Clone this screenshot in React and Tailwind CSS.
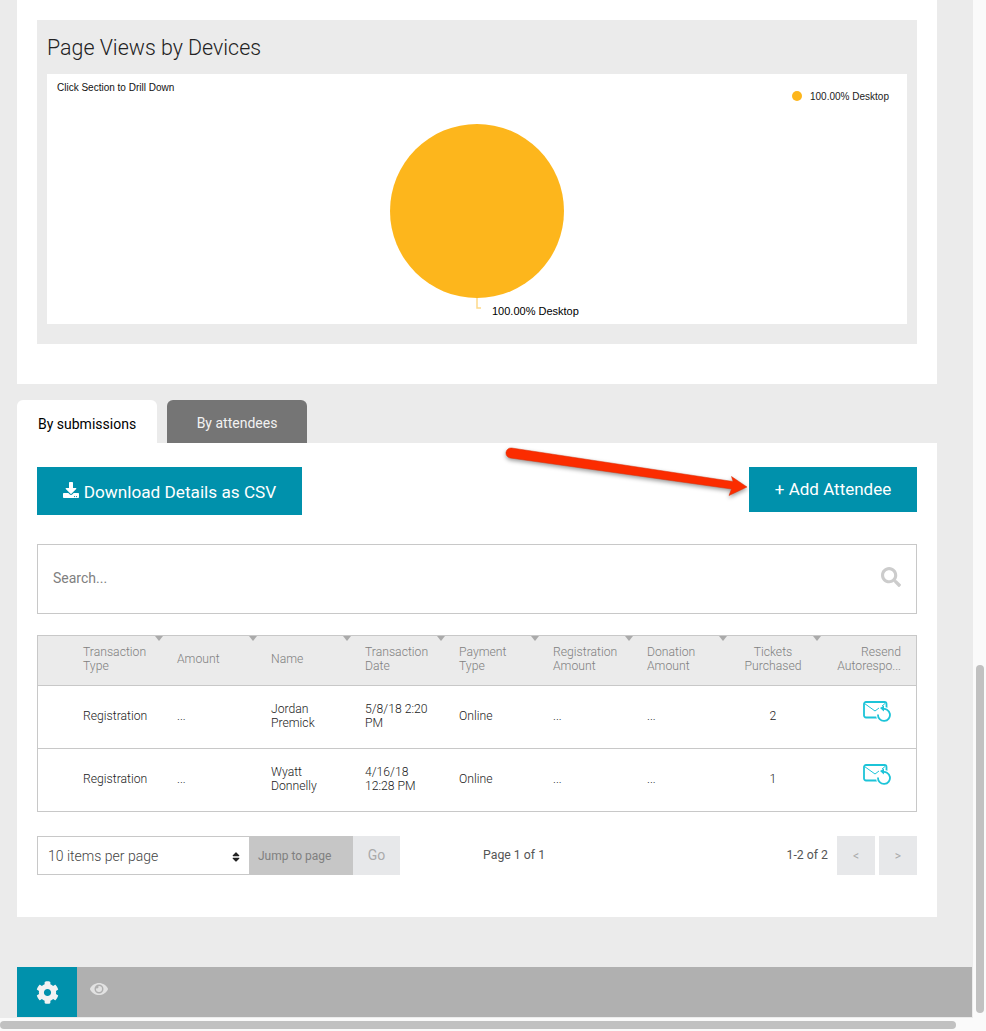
import { FaCog, FaDownload, FaEye, FaSearch, FaSort } from "react-icons/fa";

const headers = [
  ["Transaction", "Type"],
  ["Amount"],
  ["Name"],
  ["Transaction", "Date"],
  ["Payment", "Type"],
  ["Registration", "Amount"],
  ["Donation", "Amount"],
];

const rows = [
  { name: ["Jordan", "Premick"], date: ["5/8/18 2:20", "PM"], tickets: 2 },
  { name: ["Wyatt", "Donnelly"], date: ["4/16/18", "12:28 PM"], tickets: 1 },
];

const gridCols = "grid grid-cols-[45px_repeat(8,94px)_81px]";

function SortMark() {
  return (
    <svg className="absolute top-0 right-[14px]" width="8" height="5" viewBox="0 0 8 5">
      <path d="M0 0h8L4 5z" fill="#aaaaaa" />
    </svg>
  );
}

function Lines({ items }) {
  return items.map((t) => <div key={t}>{t}</div>);
}

function ResendIcon() {
  return (
    <svg width="28" height="21" viewBox="0 0 28 21" fill="none" stroke="#1cc4d8" strokeWidth="1.8">
      <rect x="1" y="1" width="22.5" height="15.5" rx="2" />
      <path d="M1.5 2.5 12 10l4-3M22 2.5 19 5" strokeWidth="1" />
      <circle cx="21" cy="14" r="8" fill="#fff" stroke="none" />
      <path d="M19 8.3a6 6 0 1 1-4 5.2" />
      <path d="M17 7l4-2.5v6z" fill="#1cc4d8" stroke="none" />
    </svg>
  );
}

export default function App() {
  return (
    <div className="w-[986px] h-[1031px] overflow-hidden flex flex-col bg-[#fafafa] font-['Roboto',sans-serif]">
      <div className="flex h-[1018px]">
        <main className="w-[973px] bg-[#ebebeb] pl-[17px]">
          <section className="w-[920px] h-[384px] bg-white p-5">
            <div className="h-[324px] bg-[#ebebeb] px-2.5">
              <h2 className="h-[54px] pt-[14px] text-[21.4px] leading-[28px] font-light text-[#222]">Page Views by Devices</h2>
              <svg className="block bg-white font-['Liberation_Sans',sans-serif]" width="860" height="250" viewBox="0 0 860 250">
                <text x="10" y="17" fontSize="10" fill="#111">Click Section to Drill Down</text>
                <circle cx="750" cy="22" r="5" fill="#fdb61c" />
                <text x="763" y="26" fontSize="10" fill="#222">100.00% Desktop</text>
                <circle cx="430" cy="137" r="87" fill="#fdb61c" />
                <path d="M430 224v10h4" fill="none" stroke="#fdd98a" strokeWidth="1.5" />
                <text x="445" y="241" fontSize="11" fill="#000">100.00% Desktop</text>
              </svg>
            </div>
          </section>

          <div className="flex gap-2.5 mt-4 h-[43px]">
            <div className="w-[140px] bg-white rounded-t-md pl-[21px] pt-[15px] text-[14px] leading-[18px] text-black">By submissions</div>
            <div className="w-[140px] bg-[#757575] rounded-t-md text-center pt-[14px] text-[14px] leading-[18px] text-[#f2f2f2]">By attendees</div>
          </div>

          <section className="relative w-[920px] h-[474px] bg-white px-5 pt-6">
            <svg className="absolute left-[483px] top-[2px] drop-shadow-[0_2px_2px_rgba(0,0,0,0.4)]" width="260" height="60" viewBox="0 0 260 60">
              <path d="M11.7 3 233 36.5l-1.5-5 15.5 10.500-18 8.500 2.500-6.500L10.300 13a5 5 0 0 1 1.400-10z" fill="#fb2c00" stroke="#d8300a" strokeWidth="0.5" />
            </svg>

            <div className="flex justify-between items-start">
              <button className="w-[265px] h-[48px] pt-[3px] bg-[#0091ac] text-white text-[17.2px] flex items-center justify-center gap-[5px]">
                <FaDownload className="text-[16px] mb-[6px]" />
                Download Details as CSV
              </button>
              <button className="w-[168px] h-[45px] bg-[#0091ac] text-white text-[17px]">+ Add Attendee</button>
            </div>

            <div className="mt-[29px] h-[70px] border border-[#c8c8c8] flex items-center pl-[15px] pr-[15px]">
              <input
                placeholder="Search..."
                className="flex-1 mb-0.5 outline-none text-[14px] text-[#555] placeholder:text-[#808080]"
              />
              <FaSearch className="text-[20px] text-[#cccccc] mb-1" />
            </div>

            <div className="mt-[21px] border border-[#c8c8c8] text-[12.2px] leading-[14px]">
              <div className={`${gridCols} h-[50px] bg-[#ebebeb] text-[#808080] font-light border-b border-[#c8c8c8]`}>
                <div />
                {headers.map((h, i) => (
                  <div key={i} className="relative flex flex-col justify-center pb-[3px]">
                    <Lines items={h} />
                    <SortMark />
                  </div>
                ))}
                <div className="relative flex flex-col justify-center pb-[3px] pr-[30px] text-center">
                  <div>Tickets</div>
                  <div className="-mx-2">Purchased</div>
                  <SortMark />
                </div>
                <div className="flex flex-col justify-center pb-[3px] pr-[15px] text-right whitespace-nowrap items-end">
                  <div>Resend</div>
                  <div>Autorespo...</div>
                </div>
              </div>

              {rows.map((r, i) => (
                <div
                  key={i}
                  className={`${gridCols} items-center text-[#222] font-light ${i === 0 ? "h-[63px] border-b border-[#c8c8c8]" : "h-[62px]"}`}
                >
                  <div />
                  <div className="pb-[3px]">Registration</div>
                  <div className="pb-[3px]">...</div>
                  <div className="pb-[3px]"><Lines items={r.name} /></div>
                  <div className="pb-[3px]"><Lines items={r.date} /></div>
                  <div className="pb-[3px]">Online</div>
                  <div className="pb-[3px]">...</div>
                  <div className="pb-[3px]">...</div>
                  <div className="pb-[3px] pr-[30px] text-center">{r.tickets}</div>
                  <div className="pb-[12px] flex justify-end pr-[25px]"><ResendIcon /></div>
                </div>
              ))}
            </div>

            <div className="flex items-center mt-6 h-[39px]">
              <div className="w-[213px] h-full border border-[#c8c8c8] flex items-center justify-between pl-2.5 pr-[7px] pt-0.5 text-[14px] text-[#444] font-light">
                10 items per page
                <FaSort className="text-[12px] text-[#222]" />
              </div>
              <div className="w-[103px] h-full bg-[#c6c6c6] pl-2 flex items-center text-[12px] text-[#808080]">Jump to page</div>
              <div className="w-[47px] h-full bg-[#e7e8ea] flex items-center justify-center text-[14px] text-[#aaaaaa]">Go</div>
              <div className="ml-[83px] text-[12.3px] text-[#555]">Page 1 of 1</div>
              <div className="ml-auto text-[12.3px] text-[#555]">1-2 of 2</div>
              <div className="ml-[9px] w-[38px] h-full bg-[#e7e8ea] flex items-center justify-center text-[12px] text-[#aaaaaa]">&lt;</div>
              <div className="ml-1 w-[38px] h-full bg-[#e7e8ea] flex items-center justify-center text-[12px] text-[#aaaaaa]">&gt;</div>
            </div>
          </section>

          <div className="mt-[50px] w-[955px] h-[50px] bg-[#b0b0b0] flex">
            <div className="w-[60px] bg-[#0091ac] flex items-center justify-center">
              <FaCog className="text-[23px] text-[#f2f2f2]" />
            </div>
            <FaEye className="ml-[13px] mt-[13px] text-[18px] text-[#e2e2e2]" />
          </div>
        </main>

        <aside className="w-[13px] pt-[665px] pl-[3px]">
          <div className="w-2 h-[348px] rounded-full bg-[#c1c1c1]" />
        </aside>
      </div>

      <div className="h-[13px] pt-[3px]">
        <div className="w-[956px] h-2 rounded-full bg-[#c1c1c1]" />
      </div>
    </div>
  );
}
